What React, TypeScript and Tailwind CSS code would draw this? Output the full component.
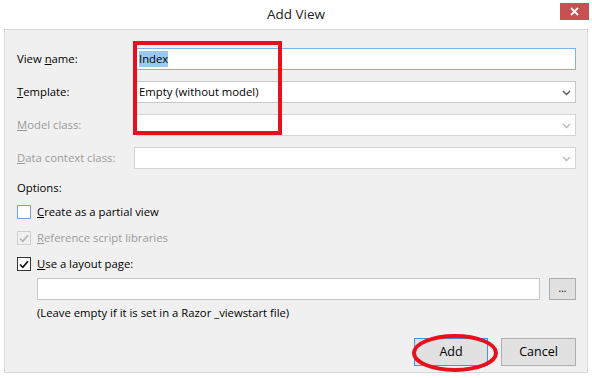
import React from 'react';

const font = { fontFamily: '"Open Sans", "Noto Sans", sans-serif' };

function Chevron({ muted }: { muted?: boolean }) {
  return (
    <svg width="9" height="6" viewBox="0 0 9 6" className="absolute right-[4px] top-[8px]">
      <path d="M1 1 L4.5 4.5 L8 1" fill="none" stroke={muted ? '#b8b8b8' : '#555'} strokeWidth="1.3" />
    </svg>
  );
}

function Field({ label, u, rest, disabled, children, offset }: { label?: string; u: string; rest: string; disabled?: boolean; children: React.ReactNode; offset?: boolean }) {
  return (
    <div className="flex items-center h-[22px]">
      <div className={`${offset ? 'w-[117px]' : 'w-[119px]'} shrink-0 ${disabled ? 'text-[#9b9b9b]' : 'text-black'}`}>
        {label}
        <span className="underline">{u}</span>
        {rest}
      </div>
      {children}
    </div>
  );
}

function Check({ state }: { state: 'empty' | 'disabled' | 'checked' }) {
  if (state === 'empty') {
    return <div className="w-[14px] h-[14px] border border-[#7a9fd3] bg-white shrink-0" />;
  }
  const dis = state === 'disabled';
  return (
    <div className={`w-[14px] h-[14px] border shrink-0 flex items-center justify-center ${dis ? 'border-[#cfcfcf] bg-[#f0f0f0]' : 'border-[#333] bg-white'}`}>
      <svg width="10" height="9" viewBox="0 0 10 9">
        <path d="M1 4.5 L3.8 7.3 L9 1.2" fill="none" stroke={dis ? '#b4b4b4' : '#111'} strokeWidth="1.7" />
      </svg>
    </div>
  );
}

export default function App() {
  return (
    <div className="relative w-[592px] h-[378px] bg-white overflow-hidden text-[11.3px]" style={font}>
      {/* title bar */}
      <div className="relative h-[29px] flex items-center justify-center">
        <span className="text-[13.5px] text-[#222] mt-[-1px]">Add View</span>
        <div className="absolute right-[3px] top-[3px] w-[29px] h-[17px] bg-[#c75050] flex items-center justify-center">
          <svg width="9" height="9" viewBox="0 0 9 9">
            <path d="M1 1 L8 8 M8 1 L1 8" stroke="#fff" strokeWidth="1.8" />
          </svg>
        </div>
      </div>

      {/* body */}
      <div className="mx-[4px] h-[344px] bg-[#f0f0f0] border border-[#d8d8d8] pl-[12px] pr-[11px] pt-[18px]">
        <div className="flex flex-col gap-[11px]">
          <Field label="View " u="n" rest="ame:">
            <div className="flex-1 h-[22px] bg-white border border-[#7eb4ea] flex items-center pl-[2px]">
              <span className="bg-[#99c9ef] leading-[16px]">Index</span>
            </div>
          </Field>
          <Field u="T" rest="emplate:">
            <div className="relative flex-1 h-[22px] bg-white border border-[#c6c6c6] flex items-center pl-[2px]">
              Empty (without model)
              <Chevron />
            </div>
          </Field>
          <Field u="M" rest="odel class:" disabled>
            <div className="relative flex-1 h-[22px] bg-white border border-[#d4d4d4]">
              <Chevron muted />
            </div>
          </Field>
          <Field u="D" rest="ata context class:" disabled offset>
            <div className="relative flex-1 h-[22px] bg-white border border-[#d4d4d4]">
              <Chevron muted />
            </div>
          </Field>
        </div>

        <div className="mt-[10px] h-[18px] flex items-center">Options:</div>

        <div className="mt-[8px] flex flex-col gap-[12px]">
          <div className="flex items-center gap-[6px] h-[14px]">
            <Check state="empty" />
            <span><span className="underline">C</span>reate as a partial view</span>
          </div>
          <div className="flex items-center gap-[6px] h-[14px] text-[#9b9b9b]">
            <Check state="disabled" />
            <span><span className="underline">R</span>eference script libraries</span>
          </div>
          <div className="flex items-center gap-[6px] h-[14px]">
            <Check state="checked" />
            <span><span className="underline">U</span>se a layout page:</span>
          </div>
        </div>

        <div className="mt-[7px] pl-[20px] flex items-center gap-[9px]">
          <div className="flex-1 h-[22px] bg-white border border-[#c6c6c6]" />
          <div className="w-[27px] h-[22px] bg-[#e1e1e1] border border-[#adadad] flex items-center justify-center text-[10px] leading-none pb-[3px]">...</div>
        </div>
        <div className="mt-[3px] pl-[20px] h-[20px] flex items-center">(Leave empty if it is set in a Razor _viewstart file)</div>

        <div className="mt-[15px] flex justify-end gap-[13px]">
          <div className="w-[74px] h-[28px] bg-[#e1e1e1] border border-[#3399ff] flex items-center justify-center text-[12.5px]">Add</div>
          <div className="w-[75px] h-[28px] bg-[#e1e1e1] border border-[#adadad] flex items-center justify-center text-[12.5px]">Cancel</div>
        </div>
      </div>

      {/* annotation overlays */}
      <div className="absolute left-[133px] top-[41px] w-[149px] h-[94px] border-[4px] border-[#e8101c]" />
      <svg className="absolute left-[411px] top-[333px]" width="88" height="40" viewBox="0 0 88 40">
        <ellipse cx="44" cy="20" rx="41" ry="17" fill="none" stroke="#e8101c" strokeWidth="4" />
      </svg>
    </div>
  );
}
